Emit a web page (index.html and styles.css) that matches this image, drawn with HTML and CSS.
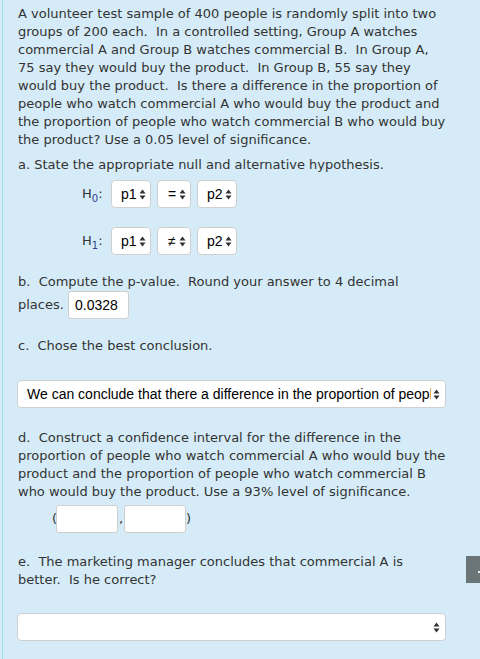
FILE: index.html
```html
<!DOCTYPE html>
<html>
<head>
<meta charset="utf-8">
<link rel="stylesheet" href="styles.css">
</head>
<body>
<div class="page">
  <p class="question">A volunteer test sample of 400 people is randomly split into two groups of 200 each.&nbsp; In a controlled setting, Group A watches commercial A and Group B watches commercial B.&nbsp; In Group A, 75 say they would buy the product.&nbsp; In Group B, 55 say they would buy the product.&nbsp; Is there a difference in the proportion of people who watch commercial A who would buy the product and the proportion of people who watch commercial B who would buy the product? Use a 0.05 level of significance.</p>

  <p class="part">a. State the appropriate null and alternative hypothesis.</p>
  <div class="hyp">
    <span class="hlabel">H<sub>0</sub>:</span>
    <span class="sel w40"><span class="val">p1</span><svg class="arr" viewBox="0 0 7 11" width="7" height="11"><path d="M0.5 4.5 L3.5 0.5 L6.5 4.5 Z M0.5 6.5 L3.5 10.5 L6.5 6.5 Z"/></svg></span>
    <span class="sel w34"><span class="val">=</span><svg class="arr" viewBox="0 0 7 11" width="7" height="11"><path d="M0.5 4.5 L3.5 0.5 L6.5 4.5 Z M0.5 6.5 L3.5 10.5 L6.5 6.5 Z"/></svg></span>
    <span class="sel w40"><span class="val">p2</span><svg class="arr" viewBox="0 0 7 11" width="7" height="11"><path d="M0.5 4.5 L3.5 0.5 L6.5 4.5 Z M0.5 6.5 L3.5 10.5 L6.5 6.5 Z"/></svg></span>
  </div>
  <div class="hyp">
    <span class="hlabel">H<sub>1</sub>:</span>
    <span class="sel w40"><span class="val">p1</span><svg class="arr" viewBox="0 0 7 11" width="7" height="11"><path d="M0.5 4.5 L3.5 0.5 L6.5 4.5 Z M0.5 6.5 L3.5 10.5 L6.5 6.5 Z"/></svg></span>
    <span class="sel w34"><span class="val">≠</span><svg class="arr" viewBox="0 0 7 11" width="7" height="11"><path d="M0.5 4.5 L3.5 0.5 L6.5 4.5 Z M0.5 6.5 L3.5 10.5 L6.5 6.5 Z"/></svg></span>
    <span class="sel w40"><span class="val">p2</span><svg class="arr" viewBox="0 0 7 11" width="7" height="11"><path d="M0.5 4.5 L3.5 0.5 L6.5 4.5 Z M0.5 6.5 L3.5 10.5 L6.5 6.5 Z"/></svg></span>
  </div>

  <p class="part b">b.&nbsp; Compute the p-value.&nbsp; Round your answer to 4 decimal places. <span class="inp pval">0.0328</span></p>

  <p class="part c">c.&nbsp; Chose the best conclusion.</p>
  <div class="sel wide"><span class="val clip">We can conclude that there a difference in the proportion of people who watch commercial A who would buy the product</span><svg class="arr" viewBox="0 0 7 11" width="7" height="11"><path d="M0.5 4.5 L3.5 0.5 L6.5 4.5 Z M0.5 6.5 L3.5 10.5 L6.5 6.5 Z"/></svg></div>

  <p class="part d">d.&nbsp; Construct a confidence interval for the difference in the proportion of people who watch commercial A who would buy the product and the proportion of people who watch commercial B who would buy the product. Use a 93% level of significance.</p>
  <div class="ci">
    <span class="paren">(</span><span class="inp ciin"></span><span class="comma">,</span><span class="inp ciin"></span><span class="paren">)</span>
  </div>

  <p class="part e">e.&nbsp; The marketing manager concludes that commercial A is better.&nbsp; Is he correct?</p>
  <div class="sel wide"><span class="val clip"></span><svg class="arr" viewBox="0 0 7 11" width="7" height="11"><path d="M0.5 4.5 L3.5 0.5 L6.5 4.5 Z M0.5 6.5 L3.5 10.5 L6.5 6.5 Z"/></svg></div>
</div>
<div class="sidetab"><span class="tabmark"></span></div>
</body>
</html>
```

FILE: styles.css
```css
html, body {
  margin: 0;
  padding: 0;
  background: #d5ecf8;
}
body {
  min-height: 659px;
}
.page {
  margin-left: 2px;
  border-left: 1px solid #a6dfee;
  padding: 5px 0 18px 15px;
  width: 430px;
  min-height: 636px;
  font-family: "DejaVu Sans", Verdana, sans-serif;
  font-size: 13px;
  line-height: 18px;
  color: #333;
}
p {
  margin: 0;
}
.question {
  margin-bottom: 7px;
}
.hyp {
  display: flex;
  align-items: center;
  gap: 6px;
  padding-left: 64px;
  margin-top: 6px;
}
.hyp + .hyp {
  margin-top: 19px;
}
.hlabel {
  width: 19px;
  margin-right: 4px;
}
.hlabel sub {
  font-size: 10px;
  color: #2f3f8a;
  vertical-align: -4px;
  line-height: 0;
}
.sel {
  box-sizing: border-box;
  display: inline-flex;
  align-items: center;
  justify-content: space-between;
  height: 28px;
  background: #fff;
  border: 1px solid #cfcfcf;
  border-radius: 4px;
  padding: 0 4px 0 9px;
  font-family: "Liberation Sans", Arial, sans-serif;
  font-size: 14px;
  color: #000;
}
.w40 { width: 40px; }
.w34 { width: 34px; padding-left: 10px; }
.arr {
  flex: none;
  fill: #333;
}
.part.b {
  margin-top: 18px;
}
.inp {
  box-sizing: border-box;
  display: inline-block;
  vertical-align: middle;
  height: 28px;
  background: #fff;
  border: 1px solid #cfcfcf;
  border-radius: 3px;
  font-family: "Liberation Sans", Arial, sans-serif;
  font-size: 14px;
  line-height: 26px;
  color: #000;
}
.pval {
  width: 61px;
  padding-left: 6px;
}
.part.c {
  margin-top: 18px;
}
.wide {
  display: flex;
  width: 429px;
  margin-left: -1px;
  margin-top: 25px;
  padding: 0 5px 0 9px;
  font-size: 14px;
}
.clip {
  flex: 1;
  overflow: hidden;
  white-space: nowrap;
  margin-right: 2px;
}
.part.d {
  margin-top: 21px;
}
.ci {
  display: flex;
  align-items: center;
  margin-top: 4px;
  padding-left: 34px;
}
.ciin {
  width: 62px;
}
.paren {
  width: 4px;
}
.comma {
  width: 6px;
  text-align: center;
}
.part.e {
  margin-top: 20px;
}
.part.e + .wide {
  margin-top: 24px;
}
.sidetab {
  position: absolute;
  left: 466px;
  top: 556px;
  width: 14px;
  height: 27px;
  background: #6b7577;
}
.tabmark {
  position: absolute;
  left: 12px;
  top: 15px;
  width: 2px;
  height: 2px;
  background: #e6ecee;
}
```
